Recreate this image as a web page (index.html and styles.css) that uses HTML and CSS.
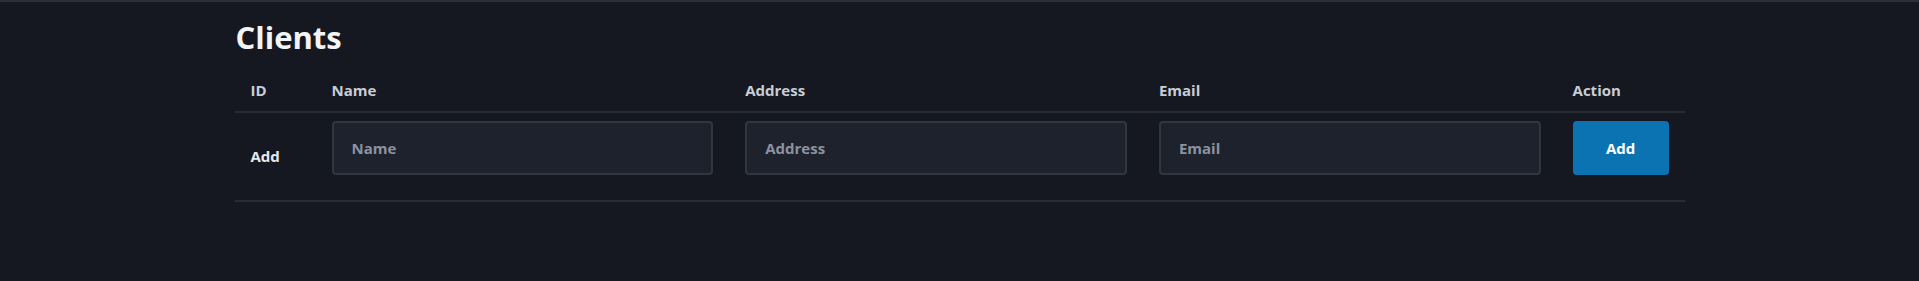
FILE: index.html
```html
<!DOCTYPE html>
<html lang="en">
<head>
<meta charset="utf-8">
<title>Clients</title>
<link rel="stylesheet" href="styles.css">
</head>
<body>
<main class="container">
  <h1 class="title">Clients</h1>
  <table class="clients">
    <colgroup>
      <col class="col-id">
      <col class="col-field">
      <col class="col-field">
      <col class="col-field">
      <col class="col-action">
    </colgroup>
    <thead>
      <tr>
        <th>ID</th>
        <th>Name</th>
        <th>Address</th>
        <th>Email</th>
        <th>Action</th>
      </tr>
    </thead>
    <tbody>
      <tr>
        <td class="row-label">Add</td>
        <td><input class="field" type="text" placeholder="Name"></td>
        <td><input class="field" type="text" placeholder="Address"></td>
        <td><input class="field" type="email" placeholder="Email"></td>
        <td><button class="btn-add" type="button">Add</button></td>
      </tr>
    </tbody>
  </table>
</main>
</body>
</html>
```
FILE: styles.css
```css
html, body {
  margin: 0;
  padding: 0;
  background: #151820;
}

body {
  border-top: 2px solid #2c2f36;
  font-family: "Open Sans", "Noto Sans", sans-serif;
  color: #e4e7ec;
}

.container {
  max-width: 1450px;
  margin: 0 auto;
  padding-top: 16px;
}

.title {
  margin: 0 0 13px 1px;
  font-size: 31px;
  line-height: 38px;
  font-weight: 700;
  color: #f2f4f7;
}

.clients {
  width: 100%;
  table-layout: fixed;
  border-collapse: collapse;
}

.col-id { width: 81px; }
.col-field { width: 413.7px; }
.col-action { width: 127.9px; }

.clients th {
  text-align: left;
  padding: 10px 16px;
  font-size: 15px;
  line-height: 22px;
  font-weight: 700;
  color: #c9cdd5;
  border-bottom: 2px solid #272b34;
}

.clients td {
  padding: 8px 16px 10px;
  vertical-align: top;
  border-bottom: 2px solid #272b34;
}

.clients td.row-label {
  vertical-align: middle;
  font-size: 15px;
  font-weight: 700;
  color: #e6e9ee;
}

.field {
  display: block;
  box-sizing: border-box;
  width: 100%;
  height: 54px;
  margin-bottom: 15px;
  padding: 0 18px;
  background: #1e222c;
  border: 2px solid #313641;
  border-radius: 4px;
  font-family: inherit;
  font-size: 15px;
  font-weight: 700;
  color: #e4e7ec;
  outline: none;
}

.field::placeholder {
  color: #8c93a0;
}

.btn-add {
  display: block;
  box-sizing: border-box;
  width: 96px;
  height: 54px;
  margin-bottom: 15px;
  padding: 0;
  background: #0b73b2;
  border: none;
  border-radius: 4px;
  font-family: inherit;
  font-size: 15px;
  font-weight: 700;
  color: #ffffff;
  cursor: pointer;
}
```
